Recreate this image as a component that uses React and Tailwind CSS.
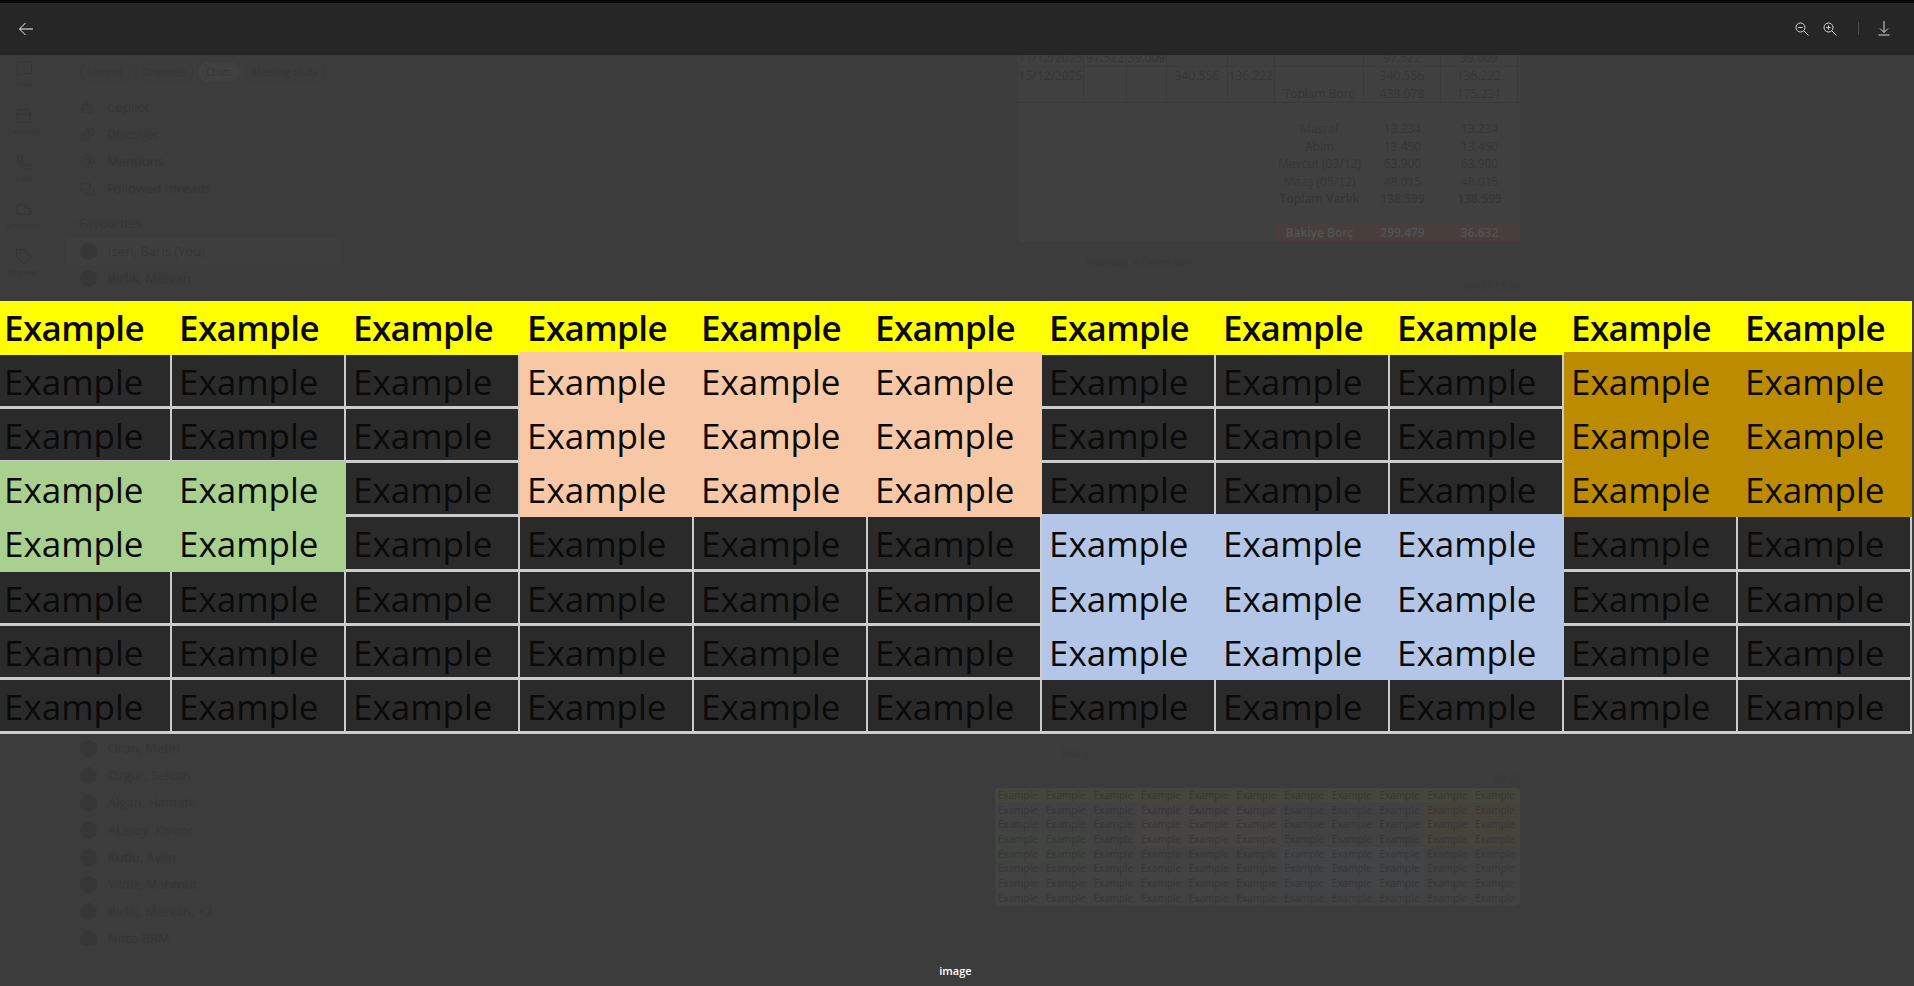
import React from "react";
import { MessageSquare, Calendar, Phone, Cloud, Sparkles, AtSign, MessagesSquare, ChevronDown, Bot, Tag } from "lucide-react";

const HEADER = "bg-[#ffff00] font-semibold tracking-[-0.6px] pb-[2px]";
const DARK = "bg-[#2a2a2a] border-r-2 border-b-[3px] border-[#cccccc] pt-[2px]";
const PEACH = "bg-[#f7c7a6] pb-[1px]";
const PEACH_TOP = "bg-[#f7c7a6] -mt-[3px] pt-[3px] pb-[1px]";
const BROWN = "bg-[#bd8b00] pb-[1px]";
const BROWN_TOP = "bg-[#bd8b00] -mt-[3px] pt-[3px] pb-[1px]";
const GREEN = "bg-[#a9d08e] pb-[1px]";
const GREEN_TOP = "bg-[#a9d08e] -mt-[2px] pt-[2px] pb-[1px]";
const BLUE = "bg-[#b4c6e7] pb-[1px]";
const BLUE_TOP = "bg-[#b4c6e7] -mt-[3px] pt-[3px] pb-[1px]";

const cellClass = (row, col) => {
    if (row === 0) return HEADER;
    if (col >= 3 && col <= 5 && row <= 3) return row === 1 ? PEACH_TOP : PEACH;
    if (col >= 9 && row <= 3) return row === 1 ? BROWN_TOP : BROWN;
    if (col <= 1 && (row === 3 || row === 4)) return row === 3 ? GREEN_TOP : GREEN;
    if (col >= 6 && col <= 8 && row >= 4 && row <= 6) return row === 4 ? BLUE_TOP : BLUE;
    return DARK;
};

const smallCellClass = (row, col) => {
    if (row === 0) return "bg-[#45463c]";
    if (col >= 3 && col <= 5 && row <= 3) return "bg-[#464341]";
    if (col >= 9 && row <= 3) return "bg-[#46433b]";
    if (col <= 1 && (row === 3 || row === 4)) return "bg-[#424441]";
    if (col >= 6 && col <= 8 && row >= 4 && row <= 6) return "bg-[#424446]";
    return "bg-[#424242]";
};

const ROWS = [0, 1, 2, 3, 4, 5, 6, 7];
const COLS = [0, 1, 2, 3, 4, 5, 6, 7, 8, 9, 10];

const RAIL = [
    { label: "Chat", icon: MessageSquare },
    { label: "Calendar", icon: Calendar },
    { label: "Calls", icon: Phone },
    { label: "OneDrive", icon: Cloud },
    { label: "Planner", icon: Tag },
];

const SHORTCUTS = [
    { label: "Copilot", icon: Bot },
    { label: "Discover", icon: Sparkles },
    { label: "Mentions", icon: AtSign },
    { label: "Followed threads", icon: MessagesSquare },
];

const LOWER_CHATS = [
    "Oran, Metin",
    "Ozgur, Selcan",
    "Algan, Hamide",
    "Atasoy, Kivanc",
    "Kutlu, Aylin",
    "Yildiz, Mahmut",
    "Birlik, Mervan, +2",
    "Nitto BRM",
];

const LEDGER = [
    ["11/12/2025", "97.522", "39.009", "", "", "", "97.522", "39.009"],
    ["15/12/2025", "", "", "340.556", "136.222", "", "340.556", "136.222"],
    ["", "", "", "", "", "Toplam Borç", "438.078", "175.231"],
];

const SUMMARY = [
    ["Masraf", "13.234", "13.234", ""],
    ["Abim", "13.450", "13.450", ""],
    ["Mevcut (03/12)", "63.900", "63.900", ""],
    ["Maaş (05/12)", "48.015", "48.015", ""],
    ["Toplam Varlık", "138.599", "138.599", "font-semibold"],
];

const ChatRow = ({ name, selected }) => (
    <div
        className={`flex items-center h-[27.2px] gap-[11px] ml-[65px] mr-[6px] pl-[15px] rounded-[4px] ${
            selected ? "bg-[#3e3e3e]" : ""
        }`}
    >
        <div className="w-[17px] h-[17px] rounded-full bg-[#373737]" />
        <span>{name}</span>
    </div>
);

const BackgroundApp = () => (
    <div className="flex h-full bg-[#3c3c3c] text-[#363636] text-[13px] font-['Open_Sans',sans-serif]">
        <div className="w-[48px] pt-[60px] flex flex-col items-center gap-[15px] text-[8px] shrink-0">
            {RAIL.map(({ label, icon: Icon }) => (
                <div key={label} className="flex flex-col items-center h-[32px] gap-[1px]">
                    <Icon size={17} strokeWidth={1.5} />
                    <span>{label}</span>
                </div>
            ))}
        </div>
        <div className="w-[300px] pt-[62px] shrink-0 h-[946px] overflow-hidden">
            <div className="flex gap-[4px] pl-[32px] h-[20px] text-[10px]">
                {["Unread", "Channels", "Chats", "Meeting chats"].map((pill) => (
                    <span
                        key={pill}
                        className={`rounded-full px-[7px] flex items-center border border-[#393939] ${
                            pill === "Chats" ? "bg-[#414141] border-transparent" : ""
                        }`}
                    >
                        {pill}
                    </span>
                ))}
            </div>
            <div className="mt-[12px] pl-[32px] flex flex-col">
                {SHORTCUTS.map(({ label, icon: Icon }) => (
                    <div key={label} className="flex items-center h-[27.2px] gap-[12px]">
                        <Icon size={15} strokeWidth={1.25} />
                        <span>{label}</span>
                    </div>
                ))}
            </div>
            <div className="mt-[7px] pl-[20px] h-[27px] flex items-center gap-[1px]">
                <ChevronDown size={10} />
                <span>Favourites</span>
            </div>
            <div className="-ml-[48px] mt-[1px]">
                <ChatRow name="Iseri, Baris (You)" selected />
                <ChatRow name="Birlik, Mervan" />
            </div>
            {/* rows between here and Oran are hidden behind the picture */}
            <div className="-ml-[48px] mt-[443px]">
                {LOWER_CHATS.map((name) => (
                    <ChatRow key={name} name={name} />
                ))}
            </div>
        </div>
        <div className="flex-1 pl-[670px] pr-[394px] text-[#363636]">
            <div className="mt-[49px] h-[193px] bg-[#404040] rounded-b-[4px] text-[12px]">
                {LEDGER.map((row, i) => (
                    <div
                        key={i}
                        className={`grid grid-cols-[66px_43px_40px_61px_47px_89px_77px_77px] h-[18px] leading-[18px] text-center ${
                            i === 1 ? "" : "border-b border-[#3a3a3a]"
                        }`}
                    >
                        {row.map((value, j) => (
                            <span key={j} className="border-r border-[#3a3a3a]">
                                {value}
                            </span>
                        ))}
                    </div>
                ))}
                <div className="mt-[17px] pl-[257px]">
                    {SUMMARY.map(([label, a, b, weight]) => (
                        <div key={label} className={`grid grid-cols-[89px_77px_77px] h-[17.6px] leading-[17.6px] text-center ${weight}`}>
                            <span className="whitespace-nowrap">{label}</span>
                            <span>{a}</span>
                            <span>{b}</span>
                        </div>
                    ))}
                    <div className="mt-[16px] grid grid-cols-[89px_77px_77px] h-[18px] leading-[18px] text-center bg-[#483f3d] text-[#535353] font-semibold">
                        <span>Bakiye Borç</span>
                        <span>299.479</span>
                        <span>36.632</span>
                    </div>
                </div>
            </div>
            <div className="pl-[67px] mt-[13px] text-[10px] text-[#383838]">Thursday, 4 December</div>
            <div className="mt-[9px] text-right text-[10px] text-[#383838]">04/12 15:30</div>
            <div className="mt-[452px] pl-[66px] -ml-[23px] text-[10px] text-[#383838]">Today</div>
            <div className="mt-[11px] text-right text-[10px] text-[#383838]">08:23</div>
            <div className="-ml-[23px] mt-[1px] rounded-[4px] overflow-hidden grid grid-cols-[repeat(11,47.7px)] grid-rows-[repeat(8,14.7px)] text-[10px] leading-[14.7px] text-[#363636]">
                {ROWS.map((row) =>
                    COLS.map((col) => (
                        <span key={`${row}-${col}`} className={`pl-[3px] ${smallCellClass(row, col)}`}>
                            Example
                        </span>
                    ))
                )}
            </div>
        </div>
    </div>
);

const BackIcon = () => (
    <svg width="16" height="14" viewBox="0 0 16 14" fill="none" stroke="#f2f2f2" strokeWidth="1">
        <path d="M15 7H1.5M7.5 1 1.5 7l6 6" />
    </svg>
);

const ZoomIcon = ({ plus }) => (
    <svg width="14" height="14" viewBox="0 0 14 14" fill="none" stroke="#d6d6d6" strokeWidth="1">
        <circle cx="5.5" cy="5.5" r="4.5" />
        <path d="M9 9l4.5 4.5M3.3 5.5h4.4" />
        {plus && <path d="M5.5 3.3v4.4" />}
    </svg>
);

const DownloadIcon = () => (
    <svg width="12" height="15" viewBox="0 0 12 15" fill="none" stroke="#d6d6d6" strokeWidth="1">
        <path d="M6 0v11.5M2 7.5l4 4 4-4M0.5 14h11" />
    </svg>
);

const Viewer = () => (
    <div className="absolute inset-0 flex flex-col">
        <div className="h-[3px] bg-[#0a0a0a]" />
        <div className="h-[52px] bg-[#262626] flex items-center pl-[18px] pr-[24px] pb-[1px]">
            <BackIcon />
            <div className="ml-auto flex items-center">
                <ZoomIcon />
                <div className="ml-[14px]">
                    <ZoomIcon plus />
                </div>
                <div className="ml-[21px] w-px h-[13px] bg-[#4e4e4e]" />
                <div className="ml-[19px]">
                    <DownloadIcon />
                </div>
            </div>
        </div>
        <div className="mt-[246px] grid grid-cols-[172px_repeat(10,174px)] grid-rows-[54px_repeat(7,54.15px)] text-[35px] leading-none text-[#0a0a0a] font-['Open_Sans',sans-serif]">
            {ROWS.map((row) =>
                COLS.map((col) => (
                    <div
                        key={`${row}-${col}`}
                        className={`flex items-center ${col === 0 ? "pl-[4px]" : "pl-[7px]"} ${cellClass(row, col)}`}
                    >
                        Example
                    </div>
                ))
            )}
        </div>
        <div className="mt-auto h-[23px] text-center text-[11px] font-semibold text-white pr-[3px] font-['Open_Sans',sans-serif]">
            image
        </div>
    </div>
);

export default function App() {
    return (
        <div className="relative h-screen overflow-hidden">
            <BackgroundApp />
            <Viewer />
        </div>
    );
}
